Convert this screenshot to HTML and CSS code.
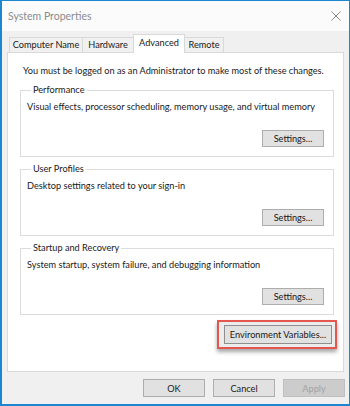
FILE: index.html
```html
<!DOCTYPE html>
<html lang="en">
<head>
    <meta charset="UTF-8">
    <title>System Properties</title>
    <link rel="stylesheet" href="styles.css">
</head>
<body>
    <div class="window">
        <div class="titlebar">
            <span class="title">System Properties</span>
            <svg class="close" width="10" height="10" viewBox="0 0 10 10">
                <path d="M0.5 0.5 L9.5 9.5 M9.5 0.5 L0.5 9.5" stroke="#8a8a8a" stroke-width="1" fill="none"/>
            </svg>
        </div>

        <div class="content">
            <div class="tabs">
                <div class="tab tab-cn">Computer Name</div>
                <div class="tab tab-hw">Hardware</div>
                <div class="tab tab-adv active">Advanced</div>
                <div class="tab tab-rem">Remote</div>
            </div>

            <div class="panel">
                <p class="notice">You must be logged on as an Administrator to make most of these changes.</p>

                <fieldset class="group">
                    <legend>Performance</legend>
                    <p class="desc">Visual effects, processor scheduling, memory usage, and virtual memory</p>
                    <div class="group-actions">
                        <button class="btn">Settings...</button>
                    </div>
                </fieldset>

                <fieldset class="group">
                    <legend>User Profiles</legend>
                    <p class="desc">Desktop settings related to your sign-in</p>
                    <div class="group-actions">
                        <button class="btn">Settings...</button>
                    </div>
                </fieldset>

                <fieldset class="group">
                    <legend>Startup and Recovery</legend>
                    <p class="desc">System startup, system failure, and debugging information</p>
                    <div class="group-actions">
                        <button class="btn">Settings...</button>
                    </div>
                </fieldset>

                <div class="env-row">
                    <div class="highlight">
                        <button class="btn btn-env">Environment Variables...</button>
                    </div>
                </div>
            </div>

            <div class="footer">
                <button class="btn btn-dialog">OK</button>
                <button class="btn btn-dialog">Cancel</button>
                <button class="btn btn-dialog" disabled>Apply</button>
            </div>
        </div>
    </div>
</body>
</html>
```

FILE: styles.css
```css
:root {
    --frame-blue: #1c86d1;
    --face: #f0f0f0;
    --line: #d9d9d9;
    --text: #1a1a1a;
    --btn-face: #e1e1e1;
    --btn-border: #adadad;
    --highlight: #e4574f;
}

* {
    margin: 0;
    padding: 0;
    box-sizing: border-box;
}

body {
    font-family: Lato, "Liberation Sans", sans-serif;
    font-size: 9.2px;
    color: var(--text);
    background-color: var(--face);
    white-space: nowrap;
}

.window {
    width: 350px;
    height: 406px;
    border: 1px solid var(--frame-blue);
    border-left-width: 2px;
    border-bottom-width: 2px;
    background-color: var(--face);
    display: flex;
    flex-direction: column;
}

.titlebar {
    height: 30px;
    background-color: #fbfbfb;
    display: flex;
    align-items: center;
    justify-content: space-between;
    padding: 0 8px 0 6px;
}

.title {
    font-size: 10.5px;
    color: #8c8c8c;
}

.content {
    padding: 3px 5px 0 5px;
}

/* tab strip */
.tabs {
    display: flex;
    align-items: flex-end;
    padding-left: 2px;
    height: 18px;
}

.tab {
    height: 15px;
    line-height: 14px;
    text-align: center;
    border: 1px solid var(--line);
    border-bottom: none;
    background-color: var(--face);
    margin-right: -1px;
}

.tab-cn { width: 74px; }
.tab-hw { width: 52px; }
.tab-adv { width: 52px; }
.tab-rem { width: 40px; }

.tab.active {
    height: 19px;
    line-height: 16px;
    background-color: #fff;
    position: relative;
    margin-bottom: -1px;
    z-index: 1;
}

/* main page */
.panel {
    height: 320px;
    background-color: #fff;
    border: 1px solid var(--line);
    padding: 11px 9px 0 12px;
}

.notice {
    line-height: 14px;
    padding-left: 3px;
    margin-bottom: 5px;
}

.group {
    border: 1px solid #dcdcdc;
    padding: 3px 9px 9px 6px;
    margin-bottom: 5px;
}

.group + .group + .group {
    margin-top: 2px;
}

.group legend {
    line-height: 14px;
    padding: 0 2px;
    margin-left: 4px;
}

.desc {
    line-height: 14px;
}

.group-actions {
    display: flex;
    justify-content: flex-end;
    margin-top: 16px;
}

.btn {
    font-family: inherit;
    font-size: 9.2px;
    color: var(--text);
    background-color: var(--btn-face);
    border: 1px solid var(--btn-border);
    height: 17px;
    width: 62px;
}

.btn:disabled {
    background-color: #cccccc;
    border-color: #bfbfbf;
    color: #a3a3a3;
}

.env-row {
    display: flex;
    justify-content: flex-end;
    margin-top: 4px;
    margin-right: -3px;
}

.highlight {
    border: 2px solid var(--highlight);
    padding: 3px 3px 3px 5px;
    background-color: #ececec;
    box-shadow: 0 3px 4px rgba(0, 0, 0, 0.35);
}

.btn-env {
    width: 108px;
    height: 19px;
    border-color: #8f8f8f;
}

.footer {
    display: flex;
    justify-content: flex-end;
    gap: 8px;
    margin-top: 7px;
    margin-right: -1px;
}

.btn-dialog {
    height: 18px;
}
```
